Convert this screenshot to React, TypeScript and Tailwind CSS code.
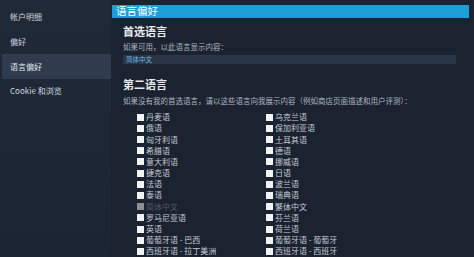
import React from "react";

const left = ["丹麦语","俄语","匈牙利语","希腊语","意大利语","捷克语","法语","泰语","简体中文","罗马尼亚语","英语","葡萄牙语 - 巴西","西班牙语 - 拉丁美洲"];
const right = ["乌克兰语","保加利亚语","土耳其语","德语","挪威语","日语","波兰语","瑞典语","繁体中文","芬兰语","荷兰语","葡萄牙语 - 葡萄牙","西班牙语 - 西班牙"];

function Item({ label, disabled }: { label: string; disabled?: boolean }) {
  return (
    <div className="flex items-center h-[11.2px] gap-[2px]">
      <span className={`w-[7px] h-[7px] shrink-0 ${disabled ? "bg-[#8a8f96]" : "bg-[#f2f2f2]"}`} />
      <span className={`text-[8px] leading-none ${disabled ? "text-[#4f5866]" : "text-[#c6ccd4]"}`}>{label}</span>
    </div>
  );
}

export default function App() {
  return (
    <div
      className="w-[474px] h-[257px] overflow-hidden flex bg-[#1b2230]"
      style={{ fontFamily: '"Noto Sans CJK SC", "Noto Sans", sans-serif' }}
    >
      <div className="w-[111px] shrink-0 bg-gradient-to-b from-[#1f2938] to-[#1c2533] pt-[5px] pl-[2px] flex flex-col">
        {["帐户明细", "偏好", "语言偏好", "Cookie 和浏览"].map((t) => (
          <div
            key={t}
            className={`h-[24.7px] flex items-center pl-[8px] text-[8px] ${t === "语言偏好" ? "bg-[#2f3c4e] text-[#e4e9ee]" : "text-[#d3d8de]"}`}
          >
            {t}
          </div>
        ))}
      </div>
      <div className="flex-1 flex flex-col pt-[5px] pl-[1px]">
        <div className="w-[357px] h-[14px] bg-[#1a9fd9] flex items-center pl-[4px] text-[10.5px] text-white leading-none">
          语言偏好
        </div>
        <div className="pl-[11px] pr-[18px]">
          <div className="mt-[8px] text-[11px] font-bold text-[#e6e9ec] leading-none">首选语言</div>
          <div className="mt-[6px] text-[7.5px] text-[#aeb6c0] leading-none">如果可用，以此语言显示内容：</div>
          <div className="mt-[5px] h-[9px] w-[333px] bg-[#2a3747] flex items-center pl-[3px] text-[6.5px] text-[#6ab7e6] leading-none">
            简体中文
          </div>
          <div className="mt-[15px] text-[11px] font-bold text-[#e6e9ec] leading-none">第二语言</div>
          <div className="mt-[7px] text-[7.5px] text-[#aeb6c0] leading-none whitespace-nowrap">
            如果没有我的首选语言，请以这些语言向我展示内容（例如商店页面描述和用户评测）：
          </div>
          <div className="mt-[7px] ml-[14px] flex">
            <div className="w-[129px] flex flex-col">
              {left.map((l) => (
                <Item key={l} label={l} disabled={l === "简体中文"} />
              ))}
            </div>
            <div className="flex flex-col">
              {right.map((l) => (
                <Item key={l} label={l} />
              ))}
            </div>
          </div>
        </div>
      </div>
      <div className="w-[5px] shrink-0 bg-[#212a37]" />
    </div>
  );
}
